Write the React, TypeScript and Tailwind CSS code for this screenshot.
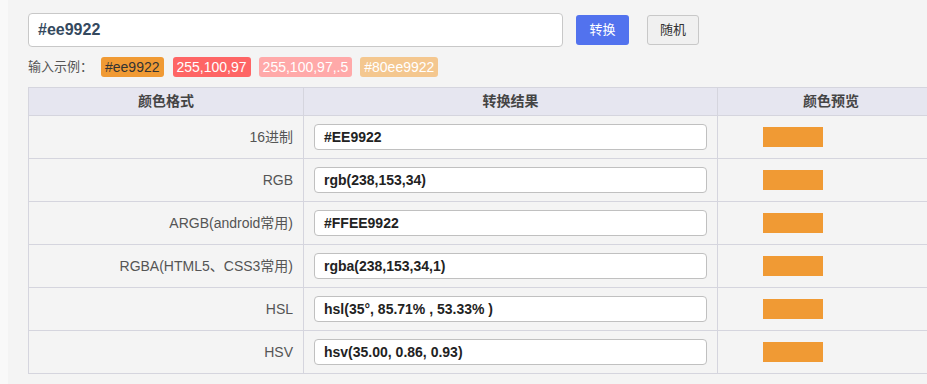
import React from "react";

const rows = [
  { label: "16进制", value: "#EE9922" },
  { label: "RGB", value: "rgb(238,153,34)" },
  { label: "ARGB(android常用)", value: "#FFEE9922" },
  { label: "RGBA(HTML5、CSS3常用)", value: "rgba(238,153,34,1)" },
  { label: "HSL", value: "hsl(35°, 85.71% , 53.33% )" },
  { label: "HSV", value: "hsv(35.00, 0.86, 0.93)" },
];

export default function App() {
  return (
    <div
      className="w-[927px] h-[384px] overflow-hidden bg-[#f9f9f9]"
      style={{ fontFamily: '"Liberation Sans", Arial, "Noto Sans CJK SC", sans-serif' }}
    >
      <div className="ml-[8px] h-full bg-[#f4f4f4] pl-[20px] pt-[13px]">
        <div className="flex items-center">
          <div className="w-[535px] h-[34px] bg-white border border-[#c8c8c8] rounded-[4px] flex items-center pl-[9px] text-[16px] font-bold text-[#34495e]">
            #ee9922
          </div>
          <button className="ml-[13px] w-[53px] h-[30px] rounded-[3px] bg-[#5272ee] text-white text-[13px] flex items-center justify-center">
            转换
          </button>
          <button className="ml-[18px] w-[52px] h-[30px] rounded-[3px] bg-[#f0f0f0] border border-[#c8c8c8] text-[#333] text-[13px] flex items-center justify-center">
            随机
          </button>
        </div>
        <div className="flex items-center mt-[10px] h-[20px]">
          <span className="text-[13px] text-[#555] w-[73px]">输入示例：</span>
          <span className="h-[20px] px-[4px] rounded-[3px] bg-[#f09a34] text-[#333] text-[14px] leading-[20px]">#ee9922</span>
          <span className="ml-[9px] h-[20px] px-[4px] rounded-[3px] bg-[#fe6565] text-white text-[14px] leading-[20px]">255,100,97</span>
          <span className="ml-[8px] h-[20px] px-[4px] rounded-[3px] bg-[#ffa9a9] text-white text-[14px] leading-[20px]">255,100,97,.5</span>
          <span className="ml-[8px] h-[20px] px-[4px] rounded-[3px] bg-[#f4c78f] text-white text-[14px] leading-[20px]">#80ee9922</span>
        </div>
        <div className="mt-[10px] w-[917px] border-l border-t border-[#d5d5de]">
          <div className="flex h-[28px] bg-[#e6e6f0] text-[14px] font-bold text-[#444]">
            <div className="w-[275px] border-r border-b border-[#d5d5de] flex items-center justify-center">颜色格式</div>
            <div className="w-[414px] border-r border-b border-[#d5d5de] flex items-center justify-center">转换结果</div>
            <div className="flex-1 border-r border-b border-[#d5d5de] flex items-center justify-center">颜色预览</div>
          </div>
          {rows.map((r) => (
            <div key={r.label} className="flex h-[43px] bg-[#f4f4f4]">
              <div className="w-[275px] border-r border-b border-[#d5d5de] flex items-center justify-end pr-[10px] text-[14px] text-[#555]">
                {r.label}
              </div>
              <div className="w-[414px] border-r border-b border-[#d5d5de] flex items-center px-[10px]">
                <div className="w-full h-[26px] bg-white border border-[#c0c0c0] rounded-[4px] flex items-center pl-[9px] text-[14px] font-bold text-[#222]">
                  {r.value}
                </div>
              </div>
              <div className="flex-1 border-r border-b border-[#d5d5de] flex items-center pl-[45px]">
                <div className="w-[60px] h-[20px] bg-[#f09a34]" />
              </div>
            </div>
          ))}
        </div>
      </div>
    </div>
  );
}
